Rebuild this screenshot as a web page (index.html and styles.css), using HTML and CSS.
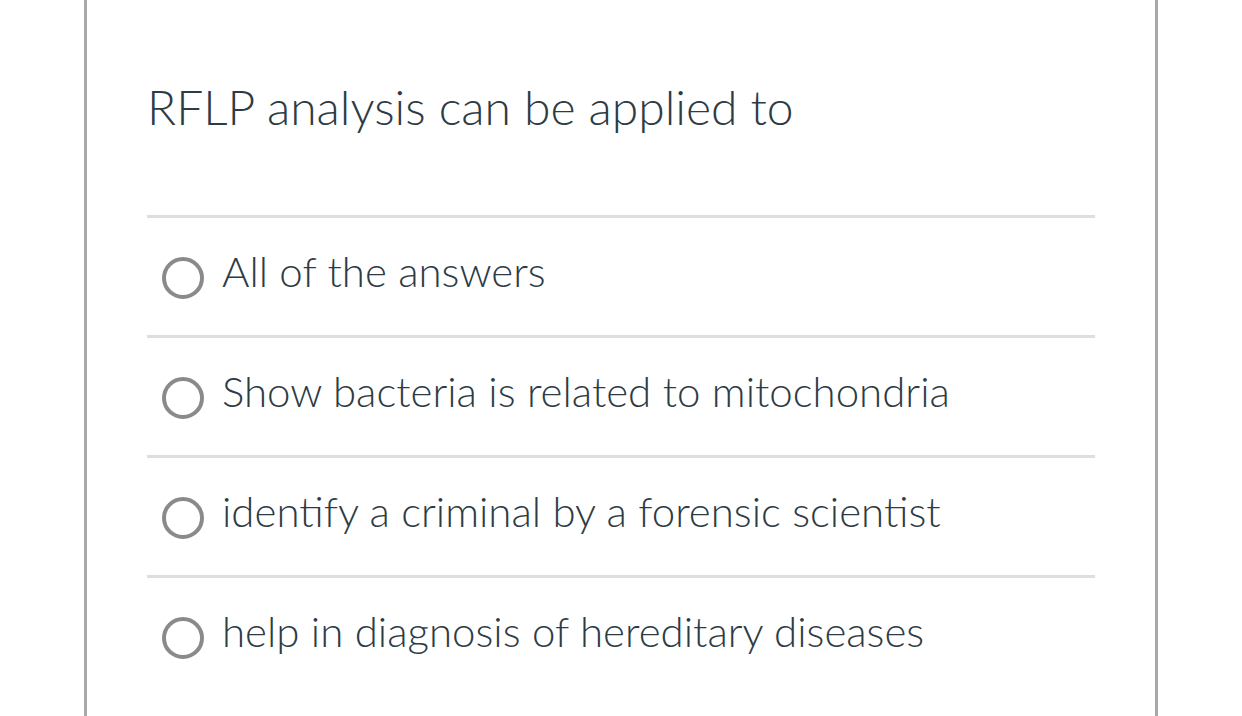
FILE: index.html
```html
<!DOCTYPE html>
<html>
<head>
<meta charset="utf-8">
<link rel="stylesheet" href="styles.css">
</head>
<body>
<div class="panel">
  <div class="question">RFLP analysis can be applied to</div>
  <div class="answers">
    <div class="answer"><span class="radio"></span><span class="label">All of the answers</span></div>
    <div class="answer"><span class="radio"></span><span class="label">Show bacteria is related to mitochondria</span></div>
    <div class="answer"><span class="radio"></span><span class="label">identify a criminal by a forensic scientist</span></div>
    <div class="answer"><span class="radio"></span><span class="label">help in diagnosis of hereditary diseases</span></div>
  </div>
</div>
</body>
</html>
```
FILE: styles.css
```css
html, body {
  margin: 0;
  padding: 0;
  background: #fff;
  overflow: hidden;
}
body {
  font-family: Lato, "Liberation Sans", sans-serif;
  font-weight: 300;
  color: #2d3b45;
}
.panel {
  margin-left: 84px;
  width: 948px;
  height: 716px;
  border-left: 3px solid #a8a8a8;
  border-right: 3px solid #a8a8a8;
  padding: 0 60px;
}
.question {
  font-size: 48px;
  line-height: 57.6px;
  padding-top: 78px;
  height: 215px;
  box-sizing: border-box;
  white-space: nowrap;
}
.answer {
  border-top: 3px solid #dedede;
  display: flex;
  align-items: flex-start;
  padding-top: 27.5px;
  height: 89.5px;
}
.radio {
  flex: none;
  width: 42px;
  height: 42px;
  box-sizing: border-box;
  border: 4px solid #8a8a8a;
  border-radius: 50%;
  margin-left: 15px;
  margin-top: 11px;
}
.label {
  font-size: 42px;
  line-height: 50.4px;
  margin-left: 18px;
  white-space: nowrap;
}
```
